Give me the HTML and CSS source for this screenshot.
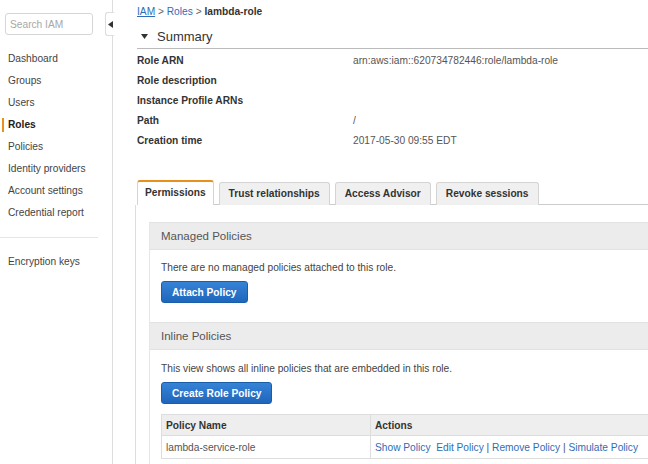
FILE: index.html
```html
<!DOCTYPE html>
<html>
<head>
<meta charset="utf-8">
<link rel="stylesheet" href="styles.css">
</head>
<body>
<div class="app">
  <aside class="sidebar">
    <div class="search"><span class="placeholder">Search IAM</span></div>
    <div class="collapse"><svg width="5" height="7" viewBox="0 0 5 7"><path d="M5 0 L0 3.5 L5 7 Z" fill="#333"/></svg></div>
    <ul class="nav">
      <li>Dashboard</li>
      <li>Groups</li>
      <li>Users</li>
      <li class="active">Roles</li>
      <li>Policies</li>
      <li>Identity providers</li>
      <li>Account settings</li>
      <li>Credential report</li>
    </ul>
    <div class="sep"></div>
    <ul class="nav nav2">
      <li>Encryption keys</li>
    </ul>
  </aside>
  <main class="main">
    <div class="crumbs"><a class="u">IAM</a> <span class="gt">&gt;</span> <a>Roles</a> <span class="gt">&gt;</span> <b>lambda-role</b></div>
    <div class="summary-head"><svg width="7" height="5" viewBox="0 0 7 5"><path d="M0 0 L7 0 L3.5 5 Z" fill="#333"/></svg><span>Summary</span></div>
    <div class="props">
      <div class="row"><span class="lbl">Role ARN</span><span class="val">arn:aws:iam::620734782446:role/lambda-role</span></div>
      <div class="row"><span class="lbl">Role description</span><span class="val"></span></div>
      <div class="row"><span class="lbl">Instance Profile ARNs</span><span class="val"></span></div>
      <div class="row"><span class="lbl">Path</span><span class="val">/</span></div>
      <div class="row"><span class="lbl">Creation time</span><span class="val">2017-05-30 09:55 EDT</span></div>
    </div>
    <div class="tabs">
      <div class="tab active">Permissions</div>
      <div class="tab">Trust relationships</div>
      <div class="tab">Access Advisor</div>
      <div class="tab">Revoke sessions</div>
    </div>
    <div class="panel">
      <div class="section">
        <div class="sec-head">Managed Policies</div>
        <div class="sec-body first">
          <p>There are no managed policies attached to this role.</p>
          <button class="btn">Attach Policy</button>
        </div>
        <div class="sec-head">Inline Policies</div>
        <div class="sec-body">
          <p>This view shows all inline policies that are embedded in this role.</p>
          <button class="btn">Create Role Policy</button>
          <table class="tbl">
            <thead><tr><th class="c1">Policy Name</th><th>Actions</th></tr></thead>
            <tbody><tr><td class="c1">lambda-service-role</td><td class="acts"><a>Show Policy</a>&nbsp; <a>Edit Policy</a> <span class="bar">|</span> <a>Remove Policy</a> <span class="bar">|</span> <a>Simulate Policy</a></td></tr></tbody>
          </table>
        </div>
      </div>
    </div>
  </main>
</div>
</body>
</html>
```
FILE: styles.css
```css
html, body { margin: 0; padding: 0; background: #fff; }
body {
  font-family: "Liberation Sans", Arial, sans-serif;
  font-size: 10.2px;
  color: #444;
  width: 648px;
  height: 464px;
  overflow: hidden;
}
.app { display: flex; height: 464px; }
.sidebar {
  position: relative;
  width: 112px;
  flex: none;
  border-right: 1px solid #ddd;
}
.search {
  margin: 13px 0 0 5px;
  width: 86px;
  height: 20px;
  border: 1px solid #d6d6d6;
  border-radius: 3px;
  display: flex;
  align-items: center;
}
.placeholder { color: #a8a8a8; padding-left: 4px; }
.collapse {
  position: absolute;
  left: 105px;
  top: 12px;
  width: 8px;
  height: 22px;
  border: 1px solid #ddd;
  border-right: none;
  border-radius: 3px 0 0 3px;
  background: #fff;
  display: flex;
  align-items: center;
  justify-content: center;
}
.nav { list-style: none; margin: 13px 0 0; padding: 0; }
.nav li {
  height: 22px;
  line-height: 22px;
  padding-left: 8px;
  color: #444;
  position: relative;
}
.nav li.active { font-weight: bold; color: #222; }
.nav li.active::before {
  content: "";
  position: absolute;
  left: 2px;
  top: 4px;
  width: 2px;
  height: 14px;
  background: #e8901c;
}
.sep { margin: 13px 0 0; width: 98px; border-top: 1px solid #e6e6e6; }
.nav2 { margin-top: 13px; }

.main { width: 600px; flex: none; padding-left: 24px; }
.crumbs { margin-top: 5px; line-height: 14px; color: #444; }
.crumbs a { color: #2f6db5; }
.crumbs a.u { text-decoration: underline; }
.crumbs .gt { color: #666; }
.crumbs b { color: #333; }
.summary-head {
  margin-top: 5px;
  height: 24px;
  display: flex;
  align-items: center;
  border-bottom: 1px solid #bbb;
}
.summary-head svg { margin: 0 9px 0 4px; }
.summary-head span { font-size: 13px; color: #333; }
.props { margin-top: 1px; }
.row { display: flex; height: 20px; align-items: center; }
.lbl { width: 216px; font-weight: bold; color: #333; }
.val { color: #555; }

.tabs {
  margin-top: 31px;
  display: flex;
  gap: 5px;
  border-bottom: 1px solid #ccc;
  height: 23px;
  align-items: flex-end;
}
.tab {
  height: 22px;
  line-height: 22px;
  padding: 0 9px;
  font-weight: bold;
  color: #333;
  background: #f0f0f0;
  border: 1px solid #d4d4d4;
  border-bottom: none;
  border-radius: 3px 3px 0 0;
  margin-bottom: -1px;
}
.tab.active {
  background: #fff;
  border-top: 2px solid #e8901c;
  height: 23px;
  padding: 0 7px;
}
.panel {
  margin-left: -2px;
  border-left: 1px solid #ddd;
  padding: 17px 0 10px 13px;
}
.section { border-left: 1px solid #e6e6e6; }
.sec-head {
  height: 28px;
  line-height: 27px;
  background: #ececec;
  border-top: 1px solid #e2e2e2;
  border-bottom: 1px solid #e2e2e2;
  box-sizing: border-box;
  padding-left: 11px;
  font-size: 11.5px;
  color: #555;
}
.sec-body { padding: 12px 0 19px 11px; }
.sec-body.first { padding-top: 11px; padding-bottom: 19px; }
.sec-body p { margin: 0 0 7px; color: #444; line-height: 13px; }
.btn {
  font-family: inherit;
  font-size: 10.2px;
  font-weight: bold;
  color: #fff;
  height: 22px;
  padding: 0 10px;
  border: 1px solid #1b5ea8;
  border-radius: 3px;
  background: linear-gradient(#3683d6, #1e66bd);
  display: block;
}
.tbl {
  margin-top: 10px;
  border-collapse: collapse;
  width: 520px;
  white-space: nowrap;
}
.tbl th, .tbl td {
  border: 1px solid #ddd;
  text-align: left;
  padding: 0 4px;
}
.tbl th { height: 20px; background: #eee; color: #333; font-weight: bold; }
.tbl td { height: 22px; color: #555; }
.tbl .c1 { width: 200px; }
.acts a { color: #2f6db5; }
.bar { color: #555; }
```
